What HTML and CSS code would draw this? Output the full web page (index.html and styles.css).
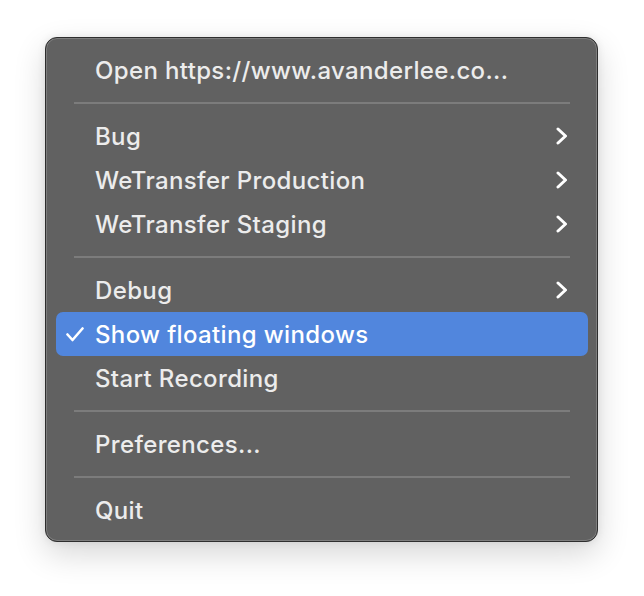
FILE: index.html
```html
<!DOCTYPE html>
<html>
<head>
<meta charset="utf-8">
<link rel="stylesheet" href="styles.css">
</head>
<body>
<div class="menu">
  <div class="item">Open https://www.avanderlee.co...</div>
  <div class="sep"></div>
  <div class="item">Bug<svg class="chev" viewBox="0 0 12 18"><polyline points="2,2 9.5,9 2,16"/></svg></div>
  <div class="item">WeTransfer Production<svg class="chev" viewBox="0 0 12 18"><polyline points="2,2 9.5,9 2,16"/></svg></div>
  <div class="item">WeTransfer Staging<svg class="chev" viewBox="0 0 12 18"><polyline points="2,2 9.5,9 2,16"/></svg></div>
  <div class="sep"></div>
  <div class="item">Debug<svg class="chev" viewBox="0 0 12 18"><polyline points="2,2 9.5,9 2,16"/></svg></div>
  <div class="item active"><svg class="check" viewBox="0 0 18 15"><polyline points="1.5,7.5 6.5,13 16.5,1.5"/></svg>Show floating windows</div>
  <div class="item">Start Recording</div>
  <div class="sep"></div>
  <div class="item">Preferences...</div>
  <div class="sep"></div>
  <div class="item">Quit</div>
</div>
</body>
</html>
```
FILE: styles.css
```css
html, body {
  margin: 0;
  padding: 0;
  background: #ffffff;
}
body {
  box-sizing: border-box;
  min-height: 596px;
  padding: 37px 0 0 45px;
}
.menu {
  box-sizing: border-box;
  width: 553px;
  height: 505px;
  background: #616161;
  border: 1px solid #2e2e2e;
  border-radius: 12px;
  box-shadow: inset 0 0 0 1px rgba(255, 255, 255, 0.18), 0 12px 32px rgba(0, 0, 0, 0.16), 0 0 8px rgba(0, 0, 0, 0.08);
  padding: 10px 9px 8px 10px;
  display: flex;
  flex-direction: column;
  font-family: Inter, "Noto Sans", sans-serif;
  font-size: 24px;
  font-weight: 450;
  color: #ececec;
}
.item {
  position: relative;
  height: 44px;
  display: flex;
  align-items: center;
  padding-left: 39px;
  padding-right: 20px;
  border-radius: 7px;
  letter-spacing: 0.36px;
}
.item.active {
  background: #5186dd;
  color: #ffffff;
}
.sep {
  height: 2px;
  margin: 10px 18px 10px 18px;
  background: #7c7c7c;
}
.chev {
  margin-left: auto;
  width: 12px;
  height: 18px;
  fill: none;
  stroke: #ffffff;
  stroke-width: 3;
  stroke-linecap: round;
  stroke-linejoin: round;
}
.check {
  position: absolute;
  left: 10px;
  top: 15px;
  width: 18px;
  height: 15px;
  fill: none;
  stroke: #ffffff;
  stroke-width: 2.6;
  stroke-linecap: round;
  stroke-linejoin: round;
}
```
